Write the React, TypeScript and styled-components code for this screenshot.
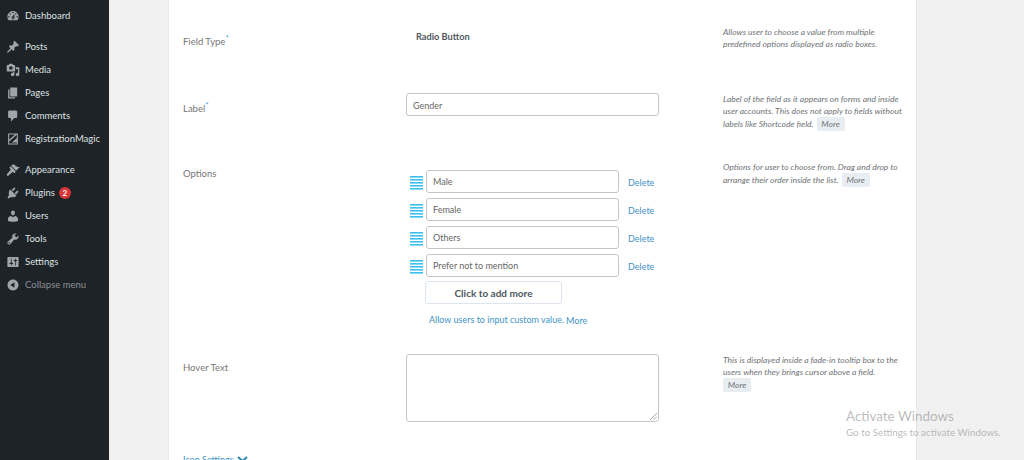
import React from 'react';
import styled, { createGlobalStyle } from 'styled-components';

const GlobalStyle = createGlobalStyle`
	html, body {
		margin: 0;
		padding: 0;
		background: #f0f0f1;
	}
	* {
		box-sizing: border-box;
	}
`;

const font = `Lato, "Open Sans", "Liberation Sans", sans-serif`;

const Page = styled.div`
	position: relative;
	display: flex;
	width: 1024px;
	height: 460px;
	overflow: hidden;
	font-family: ${font};
`;

const Sidebar = styled.nav`
	flex: none;
	width: 109px;
	padding-top: 4px;
	background: #1d2327;
`;

const MenuGroup = styled.ul`
	margin: 0 0 8px;
	padding: 0;
	list-style: none;
`;

const MenuItem = styled.li<{ $muted?: boolean }>`
	display: flex;
	align-items: center;
	height: 23px;
	padding-left: 6px;
	font-size: 9.5px;
	color: ${(p) => (p.$muted ? '#8c8f94' : '#dfe1e3')};
	white-space: nowrap;
`;

const MenuIcon = styled.svg`
	flex: none;
	width: 14px;
	height: 14px;
	margin-right: 5px;
	fill: #a0a5aa;
`;

const Badge = styled.span`
	display: flex;
	align-items: center;
	justify-content: center;
	width: 12px;
	height: 12px;
	margin-left: 4px;
	border-radius: 50%;
	background: #d63638;
	color: #fff;
	font-size: 8px;
	font-weight: 700;
`;

const Content = styled.main`
	flex: 1;
	padding-left: 59px;
`;

const Card = styled.section`
	width: 749px;
	height: 460px;
	padding: 26px 0 0 14px;
	background: #fff;
	border-left: 1px solid #e6e6e6;
	border-right: 1px solid #e6e6e6;
`;

const Row = styled.div<{ $height: number }>`
	display: grid;
	grid-template-columns: 223px 317px 180px;
	height: ${(p) => p.$height}px;
`;

const FieldLabel = styled.div<{ $top: number }>`
	padding-top: ${(p) => p.$top}px;
	font-size: 9.5px;
	line-height: 14px;
	color: #777;
`;

const Required = styled.sup`
	font-size: 8px;
	line-height: 0;
	color: #4aa3d8;
`;

const StaticValue = styled.div`
	padding: 5px 0 0 10px;
	font-size: 9.2px;
	font-weight: 700;
	line-height: 12px;
	color: #50575e;
`;

const TextInput = styled.div<{ $width?: number; $textTop?: number }>`
	display: flex;
	align-items: center;
	width: ${(p) => p.$width ?? 253}px;
	height: 23px;
	padding: ${(p) => p.$textTop ?? 0}px 0 0 6px;
	border: 1px solid #c3c6cb;
	border-radius: 3px;
	background: #fff;
	font-size: 9px;
	color: #666;
`;

const TextArea = styled.div`
	position: relative;
	width: 253px;
	height: 68px;
	border: 1px solid #c3c6cb;
	border-radius: 3px;
`;

const ResizeGrip = styled.svg`
	position: absolute;
	right: 1px;
	bottom: 1px;
	width: 7px;
	height: 7px;
	stroke: #8c8f94;
	stroke-width: 0.8;
`;

const Help = styled.p`
	margin: 0;
	font-size: 8.5px;
	font-style: italic;
	line-height: 12.2px;
	color: #6f7377;
`;

const MoreButton = styled.span`
	display: inline-block;
	width: 28px;
	height: 14px;
	margin-left: 3px;
	border-radius: 2px;
	background: #e8edf2;
	text-align: center;
	font-size: 8.5px;
	line-height: 14px;
	color: #6f7377;
`;

const WrappedMore = styled(MoreButton)`
	margin-left: 0;
`;

const OptionList = styled.div`
	display: flex;
	flex-direction: column;
	gap: 5px;
	padding-top: 9px;
`;

const OptionRow = styled.div`
	display: flex;
	align-items: center;
	padding-left: 4px;
`;

const DragHandle = styled.svg`
	flex: none;
	width: 13px;
	height: 14px;
	margin: 2px 3px 0 0;
	fill: #3cc0ee;
`;

const DeleteLink = styled.a`
	margin: 2px 0 0 9px;
	font-size: 9px;
	color: #3f93c5;
`;

const AddMore = styled.div`
	display: flex;
	align-items: center;
	justify-content: center;
	width: 137px;
	height: 23px;
	margin: -1px 0 0 19px;
	border: 1px solid #dde5ee;
	border-radius: 3px;
	font-size: 10px;
	font-weight: 700;
	color: #50575e;
`;

const CustomValue = styled.div`
	display: flex;
	align-items: baseline;
	gap: 2px;
	margin: 5px 0 0 23px;
	font-size: 9px;
	color: #3f93c5;
`;

const CustomMore = styled.span`
	position: relative;
	top: 1px;
`;

const SectionToggle = styled.div`
	display: flex;
	align-items: center;
	gap: 3px;
	margin-top: 2px;
	font-size: 9px;
	line-height: 14px;
	color: #3f93c5;
`;

const Chevron = styled.svg`
	width: 11px;
	height: 9px;
	fill: none;
	stroke: #2b86b5;
	stroke-width: 2;
`;

const Watermark = styled.div`
	position: absolute;
	left: 846px;
	top: 407px;
	color: rgba(130, 130, 130, 0.55);
	pointer-events: none;
`;

const WatermarkTitle = styled.div`
	font-size: 13.4px;
	line-height: 18px;
`;

const WatermarkText = styled.div`
	font-size: 9.8px;
	line-height: 14px;
`;

const icons = {
	dashboard:
		'M3.76 16h12.48c1.1-1.37 1.76-3.11 1.76-5 0-4.42-3.58-8-8-8s-8 3.58-8 8c0 1.89.66 3.63 1.76 5zM10 4c.55 0 1 .45 1 1s-.45 1-1 1-1-.45-1-1 .45-1 1-1zM6 6c.55 0 1 .45 1 1s-.45 1-1 1-1-.45-1-1 .45-1 1-1zm8 0c.55 0 1 .45 1 1s-.45 1-1 1-1-.45-1-1 .45-1 1-1zm-5.37 5.55L12 7v6c0 1.1-.9 2-2 2s-2-.9-2-2c0-.57.24-1.08.63-1.45zM4 10c.55 0 1 .45 1 1s-.45 1-1 1-1-.45-1-1 .45-1 1-1zm12 0c.55 0 1 .45 1 1s-.45 1-1 1-1-.45-1-1 .45-1 1-1zm-5 3c0-.55-.45-1-1-1s-1 .45-1 1 .45 1 1 1 1-.45 1-1z',
	posts:
		'M10.44 3.02l1.82-1.82 6.36 6.35-1.83 1.82c-1.05-.68-2.48-.57-3.41.36l-.75.75c-.92.93-1.04 2.35-.35 3.41l-1.83 1.82-2.41-2.41-2.8 2.79c-.42.42-3.38 2.71-3.8 2.29s1.86-3.39 2.28-3.81l2.79-2.79L4.1 9.36l1.83-1.82c1.05.69 2.48.57 3.4-.36l.75-.75c.93-.92 1.05-2.35.36-3.41z',
	media:
		'M13 11V4c0-.55-.45-1-1-1h-1.67L9 1H5L3.67 3H2c-.55 0-1 .45-1 1v7c0 .55.45 1 1 1h10c.55 0 1-.45 1-1zM7 4.5c1.38 0 2.5 1.12 2.5 2.5S8.38 9.5 7 9.5 4.5 8.38 4.5 7 5.62 4.5 7 4.5zM14 6h5v10.5c0 1.38-1.12 2.5-2.5 2.5S14 17.88 14 16.5s1.12-2.5 2.5-2.5c.17 0 .34.02.5.05V9h-3V6zm-4 8.05V13h2v3.5c0 1.38-1.12 2.5-2.5 2.5S7 17.88 7 16.5 8.12 14 9.5 14c.17 0 .34.02.5.05z',
	pages: 'M6 15V2h10v13H6zm-1 1h8v2H3V5h2v11z',
	comments: 'M5 2h9c1.1 0 2 .9 2 2v7c0 1.1-.9 2-2 2h-2l-5 5v-5H5c-1.1 0-2-.9-2-2V4c0-1.1.9-2 2-2z',
	magic:
		'M3 2h14v16H3V2zm1.5 1.5v7.2L13 3.5H4.5zm11 .6L4.5 13.4v3.1h11v-1.6H8.2l7.3-6.2V4.1z',
	appearance:
		'M14.48 11.06L7.41 3.99l1.5-1.5c.5-.56 2.3-.47 3.51.32 1.21.8 1.43 1.28 2.91 2.1 1.18.64 2.45 1.26 4.45.85l-5.3 5.3zM13.77 11.77L6.7 4.7 5.3 6.1c-.39.39-.39 1.02 0 1.41l1.06 1.06c.39.39.39 1.03 0 1.42L1.5 15.8c-.6.6-.6 1.6 0 2.2s1.6.6 2.2 0l5.3-4.9c.39-.39 1.03-.39 1.42 0l1.06 1.06c.39.39 1.02.39 1.41 0z',
	plugins:
		'M13.11 4.36L9.87 7.6 8 5.73l3.24-3.24c.35-.34 1.05-.2 1.56.32.52.51.66 1.21.31 1.55zm-8 1.77l.91-1.12 9.01 9.01-1.19.84c-.71.71-2.63 1.16-3.82 1.16H6.14L4.9 17.26c-.59.59-1.54.59-2.12 0-.59-.58-.59-1.53 0-2.12l1.24-1.24v-3.88c0-1.13.4-3.19 1.09-3.89zm7.26 3.97l3.24-3.24c.34-.35 1.04-.21 1.55.31.52.51.66 1.21.31 1.55l-3.24 3.25z',
	users:
		'M10 9.25c-2.27 0-2.73-3.44-2.73-3.44C7 4.02 7.82 2 9.97 2c2.16 0 2.98 2.02 2.71 3.81 0 0-.41 3.44-2.68 3.44zm0 2.57L12.72 10c2.39 0 4.52 2.33 4.52 4.53v2.49s-3.65 1.13-7.24 1.13c-3.65 0-7.24-1.13-7.24-1.13v-2.49c0-2.25 1.94-4.48 4.47-4.48z',
	tools:
		'M16.68 9.77c-1.34 1.34-3.3 1.67-4.95.99l-5.41 6.52c-.99.99-2.59.99-3.58 0s-.99-2.59 0-3.57l6.52-5.42c-.68-1.65-.35-3.61.99-4.95 1.28-1.28 3.12-1.62 4.72-1.06l-2.89 2.89 2.82 2.82 2.86-2.87c.53 1.58.18 3.39-1.08 4.65zM3.81 16.21c.4.39 1.04.39 1.43 0 .4-.4.4-1.04 0-1.43-.39-.4-1.03-.4-1.43 0-.39.39-.39 1.03 0 1.43z',
	settings:
		'M18 16V4c0-.55-.45-1-1-1H3c-.55 0-1 .45-1 1v12c0 .55.45 1 1 1h14c.55 0 1-.45 1-1zM8 11h1c.55 0 1 .45 1 1s-.45 1-1 1H8v1.5c0 .28-.22.5-.5.5s-.5-.22-.5-.5V13H6c-.55 0-1-.45-1-1s.45-1 1-1h1V5.5c0-.28.22-.5.5-.5s.5.22.5.5V11zm5-2h-1c-.55 0-1-.45-1-1s.45-1 1-1h1V5.5c0-.28.22-.5.5-.5s.5.22.5.5V7h1c.55 0 1 .45 1 1s-.45 1-1 1h-1v5.5c0 .28-.22.5-.5.5s-.5-.22-.5-.5V9z',
	collapse: 'M10 2.16c4.33 0 7.84 3.51 7.84 7.84s-3.51 7.84-7.84 7.84S2.16 14.33 2.16 10 5.71 2.16 10 2.16zm2 11.72V6.12L6.18 9.97z',
};

type IconName = keyof typeof icons;

const menuGroups: { name: string; icon: IconName; badge?: string; muted?: boolean }[][] = [
	[{ name: 'Dashboard', icon: 'dashboard' }],
	[
		{ name: 'Posts', icon: 'posts' },
		{ name: 'Media', icon: 'media' },
		{ name: 'Pages', icon: 'pages' },
		{ name: 'Comments', icon: 'comments' },
		{ name: 'RegistrationMagic', icon: 'magic' },
	],
	[
		{ name: 'Appearance', icon: 'appearance' },
		{ name: 'Plugins', icon: 'plugins', badge: '2' },
		{ name: 'Users', icon: 'users' },
		{ name: 'Tools', icon: 'tools' },
		{ name: 'Settings', icon: 'settings' },
		{ name: 'Collapse menu', icon: 'collapse', muted: true },
	],
];

const options = ['Male', 'Female', 'Others', 'Prefer not to mention'];

const App = () => {
	return (
		<Page>
			<GlobalStyle />
			<Sidebar>
				{menuGroups.map((group) => (
					<MenuGroup key={group[0].name}>
						{group.map((item) => (
							<MenuItem key={item.name} $muted={item.muted}>
								<MenuIcon viewBox="0 0 20 20">
									<path d={icons[item.icon]} />
								</MenuIcon>
								{item.name}
								{item.badge && <Badge>{item.badge}</Badge>}
							</MenuItem>
						))}
					</MenuGroup>
				))}
			</Sidebar>
			<Content>
				<Card>
					<Row $height={67}>
						<FieldLabel $top={9}>
							Field Type<Required>*</Required>
						</FieldLabel>
						<StaticValue>Radio Button</StaticValue>
						<Help>
							Allows user to choose a value from multiple predefined options displayed as radio boxes.
						</Help>
					</Row>
					<Row $height={68}>
						<FieldLabel $top={9}>
							Label<Required>*</Required>
						</FieldLabel>
						<div>
							<TextInput $textTop={1}>Gender</TextInput>
						</div>
						<Help>
							Label of the field as it appears on forms and inside user accounts. This does not apply to
							fields without labels like Shortcode field.
							<MoreButton>More</MoreButton>
						</Help>
					</Row>
					<Row $height={193}>
						<FieldLabel $top={6}>Options</FieldLabel>
						<OptionList>
							{options.map((option) => (
								<OptionRow key={option}>
									<DragHandle viewBox="0 0 13 14">
										<rect y="0" width="13" height="1.6" />
										<rect y="3" width="13" height="1.6" />
										<rect y="6" width="13" height="1.6" />
										<rect y="9" width="13" height="1.6" />
										<rect y="12" width="13" height="1.6" />
									</DragHandle>
									<TextInput $width={193}>{option}</TextInput>
									<DeleteLink>Delete</DeleteLink>
								</OptionRow>
							))}
							<AddMore>Click to add more</AddMore>
							<CustomValue>
								Allow users to input custom value.
								<CustomMore>More</CustomMore>
							</CustomValue>
						</OptionList>
						<Help>
							Options for user to choose from. Drag and drop to arrange their order inside the list.
							<MoreButton>More</MoreButton>
						</Help>
					</Row>
					<Row $height={97}>
						<FieldLabel $top={7}>Hover Text</FieldLabel>
						<TextArea>
							<ResizeGrip viewBox="0 0 7 7">
								<line x1="0" y1="7" x2="7" y2="0" />
								<line x1="3.5" y1="7" x2="7" y2="3.5" />
							</ResizeGrip>
						</TextArea>
						<Help>
							This is displayed inside a fade-in tooltip box to the users when they brings cursor above a
							field.
							<br />
							<WrappedMore>More</WrappedMore>
						</Help>
					</Row>
					<SectionToggle>
						Icon Settings
						<Chevron viewBox="0 0 11 9">
							<path d="M1 1l4.5 4L10 1M1 5l4.5 3.5L10 5" />
						</Chevron>
					</SectionToggle>
				</Card>
			</Content>
			<Watermark>
				<WatermarkTitle>Activate Windows</WatermarkTitle>
				<WatermarkText>Go to Settings to activate Windows.</WatermarkText>
			</Watermark>
		</Page>
	);
};

export default App;
